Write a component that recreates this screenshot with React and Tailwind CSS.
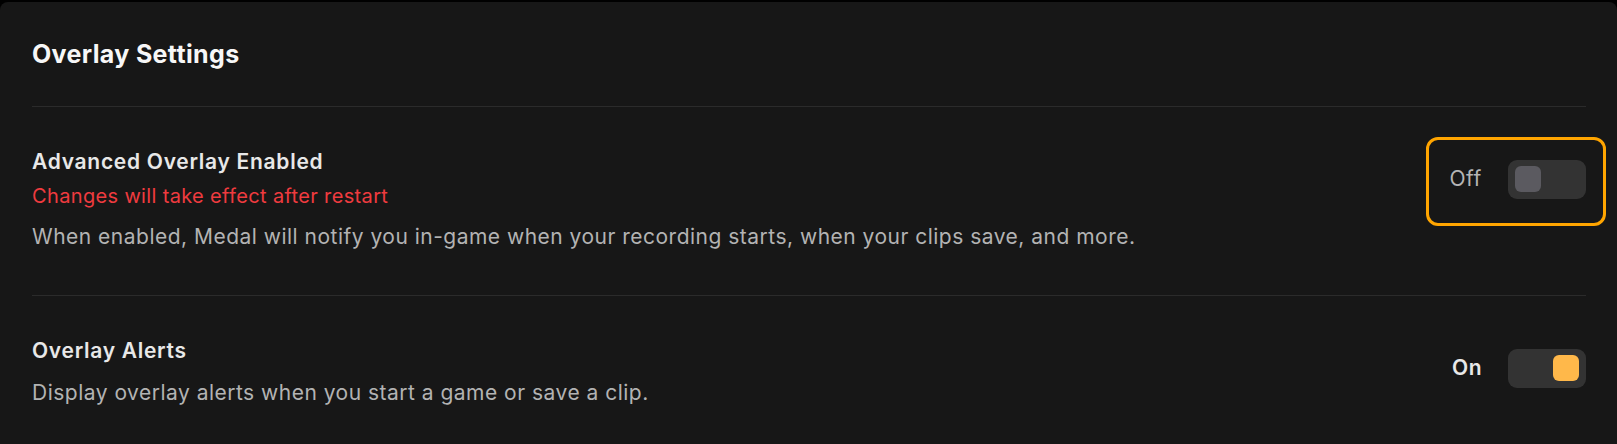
import { useState } from 'react';

function Toggle({ on, onChange }) {
    return (
        <button
            onClick={onChange}
            className={`flex items-center w-[78px] h-[39px] rounded-[9px] bg-[#333333] px-[7px] cursor-pointer ${on ? 'justify-end' : 'justify-start'}`}
        >
            <span className={`w-[26px] h-[26px] rounded-[6px] ${on ? 'bg-[#ffb84a]' : 'bg-[#5b5a60]'}`} />
        </button>
    );
}

export default function App() {
    const [advanced, setAdvanced] = useState(false);
    const [alerts, setAlerts] = useState(true);

    return (
        <div className="w-full h-[444px] bg-black pt-[2px] font-['Inter','Liberation_Sans',sans-serif]">
            <div className="h-full bg-[#171717] rounded-t-[8px] pl-[32px] pr-[31px]">
                <div className="h-[104px] flex items-center">
                    <h1 className="text-[25px] font-bold text-[#f7f7f7] leading-[28px] tracking-[0.35px]">Overlay Settings</h1>
                </div>
                <div className="h-px bg-[#2b2b2b]" />

                {/* Advanced overlay */}
                <div className="pt-[42px] pb-[45px]">
                    <div className="flex items-center justify-between">
                        <div>
                            <div className="text-[21px] font-semibold text-[#e8e8e8] leading-[26px] tracking-[0.72px]">Advanced Overlay Enabled</div>
                            <div className="mt-[8px] text-[20px] text-[#ef3b3f] leading-[26px] tracking-[0.35px]">Changes will take effect after restart</div>
                        </div>
                        <div className="-mt-[23px] -mb-[27px] -ml-[23px] -mr-[20px] pt-[20px] pb-[24px] pl-[20px] pr-[17px] border-[3px] border-[#ffa500] rounded-[12px]">
                            <div className="flex items-center gap-[26px]">
                                <span className="text-[21px] text-[#b5b5b5] tracking-[0.6px]">{advanced ? 'On' : 'Off'}</span>
                                <Toggle on={advanced} onChange={() => setAdvanced(!advanced)} />
                            </div>
                        </div>
                    </div>
                    <p className="mt-[15px] text-[21px] text-[#b3b3b3] leading-[26px] tracking-[0.49px]">
                        When enabled, Medal will notify you in-game when your recording starts, when your clips save, and more.
                    </p>
                </div>
                <div className="h-px bg-[#2b2b2b]" />

                {/* Overlay alerts */}
                <div className="pt-[42px] flex items-center justify-between">
                    <div>
                        <div className="text-[21px] font-semibold text-[#e8e8e8] leading-[26px] tracking-[0.72px]">Overlay Alerts</div>
                        <p className="mt-[16px] text-[21px] text-[#b3b3b3] leading-[26px] tracking-[0.49px]">
                            Display overlay alerts when you start a game or save a clip.
                        </p>
                    </div>
                    <div className="mb-[8px] flex items-center gap-[26px]">
                        <span className="text-[21px] font-semibold text-[#e8e8e8] tracking-[0.5px]">{alerts ? 'On' : 'Off'}</span>
                        <Toggle on={alerts} onChange={() => setAlerts(!alerts)} />
                    </div>
                </div>
            </div>
        </div>
    );
}
